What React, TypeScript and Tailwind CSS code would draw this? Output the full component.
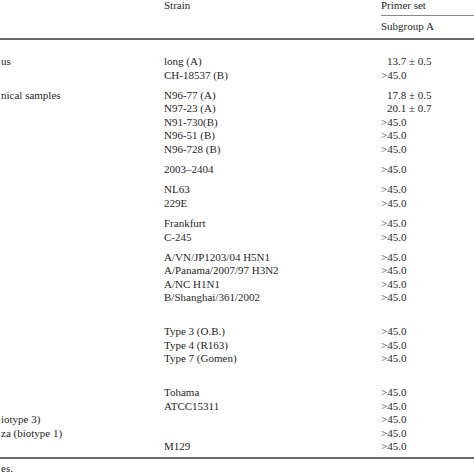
type Row = { label?: string; strain?: string; value?: string }

const groups: Row[][] = [
  [
    { label: 'us', strain: 'long (A)', value: '13.7 ± 0.5' },
    { strain: 'CH-18537 (B)', value: '>45.0' },
  ],
  [
    { label: 'nical samples', strain: 'N96-77 (A)', value: '17.8 ± 0.5' },
    { strain: 'N97-23 (A)', value: '20.1 ± 0.7' },
    { strain: 'N91-730(B)', value: '>45.0' },
    { strain: 'N96-51 (B)', value: '>45.0' },
    { strain: 'N96-728 (B)', value: '>45.0' },
  ],
  [{ strain: '2003–2404', value: '>45.0' }],
  [
    { strain: 'NL63', value: '>45.0' },
    { strain: '229E', value: '>45.0' },
  ],
  [
    { strain: 'Frankfurt', value: '>45.0' },
    { strain: 'C-245', value: '>45.0' },
  ],
  [
    { strain: 'A/VN/JP1203/04 H5N1', value: '>45.0' },
    { strain: 'A/Panama/2007/97 H3N2', value: '>45.0' },
    { strain: 'A/NC H1N1', value: '>45.0' },
    { strain: 'B/Shanghai/361/2002', value: '>45.0' },
  ],
  [
    {},
    { strain: 'Type 3 (O.B.)', value: '>45.0' },
    { strain: 'Type 4 (R163)', value: '>45.0' },
    { strain: 'Type 7 (Gomen)', value: '>45.0' },
  ],
  [
    {},
    { strain: 'Tohama', value: '>45.0' },
    { strain: 'ATCC15311', value: '>45.0' },
    { label: 'iotype 3)', value: '>45.0' },
    { label: 'za (biotype 1)', value: '>45.0' },
    { strain: 'M129', value: '>45.0' },
  ],
]

function TableRow({ row }: { row: Row }) {
  const decimal = row.value && row.value.includes('±')
  return (
    <div className="grid grid-cols-[164px_217px_1fr] h-[13.6px] leading-[13.6px] whitespace-nowrap">
      <div className="pl-[1px]">{row.label}</div>
      <div>{row.strain}</div>
      <div className={decimal ? 'pl-[6px]' : ''}>{row.value}</div>
    </div>
  )
}

export default function App() {
  return (
    <div
      className="w-[474px] h-[474px] overflow-hidden bg-white text-[11px] text-[#1f1f1f]"
      style={{ fontFamily: '"Liberation Serif", "Times New Roman", serif' }}
    >
      <div className="-mt-[2px]">
        <div className="grid grid-cols-[164px_217px_1fr]">
          <div />
          <div className="leading-[14px]">Strain</div>
          <div className="h-[18px] leading-[14px] border-b border-[#8a8a8a]">Primer set</div>
        </div>
        <div className="grid grid-cols-[164px_217px_1fr] pt-[3px] pb-[5px] border-b-2 border-[#6b6b6b]">
          <div />
          <div />
          <div className="leading-[14px]">Subgroup A</div>
        </div>
      </div>

      <div className="pt-[15px] pb-[3px] border-b-2 border-[#6b6b6b] flex flex-col gap-[6.5px]">
        {groups.map((g, i) => (
          <div key={i}>
            {g.map((r, j) => (
              <TableRow key={j} row={r} />
            ))}
          </div>
        ))}
      </div>

      <div className="mt-[3px] pl-[1px] leading-[13.6px]">es.</div>
    </div>
  )
}
